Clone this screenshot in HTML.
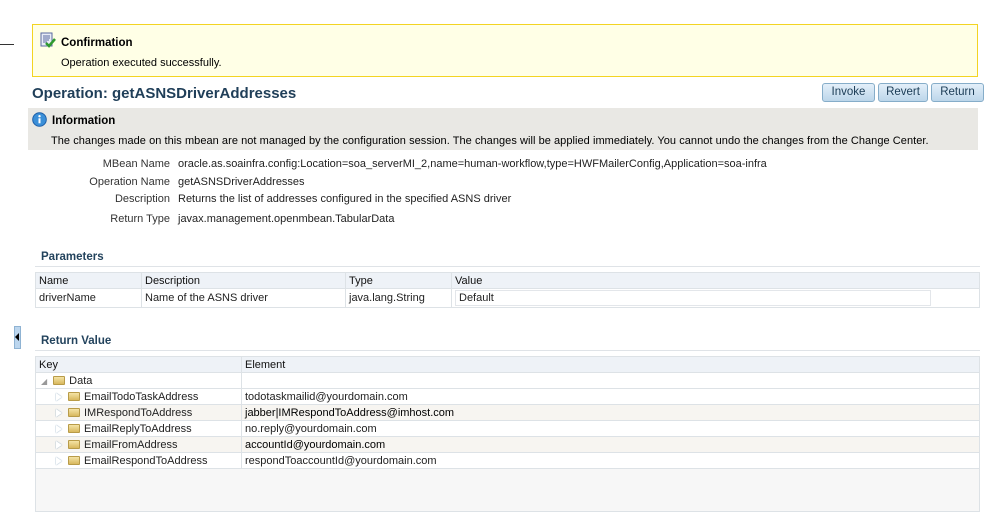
<!DOCTYPE html>
<html><head><meta charset="utf-8"><style>
*{margin:0;padding:0;box-sizing:border-box}
body{width:989px;height:512px;position:relative;background:#fff;font-family:Tahoma,"Liberation Sans","DejaVu Sans",sans-serif;font-size:11px;color:#000;overflow:hidden}
.a{position:absolute;white-space:nowrap}
.b{font-weight:bold}
.btn{position:absolute;top:83px;height:19px;border:1px solid #86adc9;border-radius:3px;background:linear-gradient(#e3eff9,#bcd6ea);color:#1a3b55;font-size:11.5px;text-align:center;line-height:17px}
.lbl{position:absolute;right:819px;color:#333;white-space:nowrap}
.val{position:absolute;left:178px;color:#222;white-space:nowrap}
.h2{position:absolute;left:41px;font-weight:bold;color:#23435d;font-size:11.5px}
.hl{position:absolute;left:35px;width:945px;height:1px;background:#dfe3e7}
table{position:absolute;border-collapse:collapse;font-size:11px}
td{border:1px solid #dde2e6;padding:0 3px;height:16px;white-space:nowrap;color:#222}
tr.h td{background:#eef2f7;color:#111}
.fold{display:inline-block;width:12px;height:9px;background:linear-gradient(#f4e3a5,#d8b85e);border:1px solid #b89b48;border-radius:1px;vertical-align:-1px;margin-right:4px}
.tri{display:inline-block;width:0;height:0;border-left:6px solid #fff;border-top:4px solid transparent;border-bottom:4px solid transparent;position:relative;margin-right:6px;vertical-align:-1px;filter:drop-shadow(0 0 0.6px #6b8fae)}
</style></head><body>
<div class="a" style="left:0;top:44px;width:14px;height:1px;background:#333"></div>
<div class="a" style="left:32px;top:24px;width:946px;height:53px;background:#ffffe6;border:1px solid #f3d422"></div>
<svg class="a" style="left:40px;top:32px" width="17" height="17" viewBox="0 0 17 17"><rect x="1" y="1" width="11" height="13" fill="#e8ecf6" stroke="#5a6aa0"/><path d="M3 4h7M3 6h7M3 8h6M3 10h4" stroke="#5a6aa0"/><path d="M6 11l3 3 6-7" stroke="#2f9a2f" stroke-width="2.5" fill="none"/></svg>
<div class="a b" style="left:61px;top:37px;font-size:11.5px">Confirmation</div>
<div class="a" style="left:61px;top:57px">Operation executed successfully.</div>
<div class="a b" style="left:32px;top:85px;font-size:15px;color:#1f3e58">Operation: getASNSDriverAddresses</div>
<div class="btn" style="left:822px;width:53px">Invoke</div>
<div class="btn" style="left:878px;width:50px">Revert</div>
<div class="btn" style="left:931px;width:53px">Return</div>
<div class="a" style="left:28px;top:108px;width:950px;height:42px;background:#e9e8e4"></div>
<svg class="a" style="left:32px;top:112px" width="15" height="15"><circle cx="7.5" cy="7.5" r="6.8" fill="#3b8fd8" stroke="#1f5fa8"/><circle cx="7.5" cy="4.2" r="1.2" fill="#fff"/><rect x="6.5" y="6.3" width="2" height="5" fill="#fff"/></svg>
<div class="a b" style="left:52px;top:115px;font-size:11.5px">Information</div>
<div class="a" style="left:51px;top:135px;letter-spacing:0.05px">The changes made on this mbean are not managed by the configuration session. The changes will be applied immediately. You cannot undo the changes from the Change Center.</div>
<div class="lbl" style="top:158px">MBean Name</div><div class="val" style="top:158px">oracle.as.soainfra.config:Location=soa_serverMI_2,name=human-workflow,type=HWFMailerConfig,Application=soa-infra</div>
<div class="lbl" style="top:176px">Operation Name</div><div class="val" style="top:176px">getASNSDriverAddresses</div>
<div class="lbl" style="top:193px">Description</div><div class="val" style="top:193px">Returns the list of addresses configured in the specified ASNS driver</div>
<div class="lbl" style="top:213px">Return Type</div><div class="val" style="top:213px">javax.management.openmbean.TabularData</div>
<div class="h2" style="top:251px">Parameters</div>
<div class="hl" style="top:266px"></div>
<table style="left:35px;top:272px;width:945px">
<tr class="h"><td style="width:106px">Name</td><td style="width:204px">Description</td><td style="width:106px">Type</td><td>Value</td></tr>
<tr><td style="height:19px">driverName</td><td>Name of the ASNS driver</td><td>java.lang.String</td><td><div style="width:476px;height:16px;border:1px solid #e3e6ea;padding-left:3px;line-height:14px">Default</div></td></tr>
</table>
<div class="a" style="left:14px;top:326px;width:7px;height:23px;background:#bcd6ee;border:1px solid #8fb3d3"></div>
<div class="a" style="left:15px;top:333px;width:0;height:0;border-right:4px solid #000;border-top:4px solid transparent;border-bottom:4px solid transparent"></div>
<div class="h2" style="top:335px">Return Value</div>
<div class="hl" style="top:350px"></div>
<div class="a" style="left:35px;top:356px;width:945px;height:156px;background:#f7f7f7;border:1px solid #dde2e6"></div>
<table style="left:35px;top:356px;width:945px">
<tr class="h"><td style="width:206px">Key</td><td>Element</td></tr>
<tr style="background:#fff"><td><span style="color:#999;font-size:8px;margin:0 6px 0 2px">◢</span><span class="fold"></span>Data</td><td></td></tr>
<tr style="background:#fff"><td style="padding-left:20px"><span class="tri"></span><span class="fold"></span>EmailTodoTaskAddress</td><td>todotaskmailid@yourdomain.com</td></tr>
<tr style="background:#f7f5f1"><td style="padding-left:20px"><span class="tri"></span><span class="fold"></span>IMRespondToAddress</td><td style="color:#000">jabber|IMRespondToAddress@imhost.com</td></tr>
<tr style="background:#fff"><td style="padding-left:20px"><span class="tri"></span><span class="fold"></span>EmailReplyToAddress</td><td>no.reply@yourdomain.com</td></tr>
<tr style="background:#f7f5f1"><td style="padding-left:20px"><span class="tri"></span><span class="fold"></span>EmailFromAddress</td><td style="color:#000">accountId@yourdomain.com</td></tr>
<tr style="background:#fff"><td style="padding-left:20px"><span class="tri"></span><span class="fold"></span>EmailRespondToAddress</td><td>respondToaccountId@yourdomain.com</td></tr>
</table>
</body></html>
